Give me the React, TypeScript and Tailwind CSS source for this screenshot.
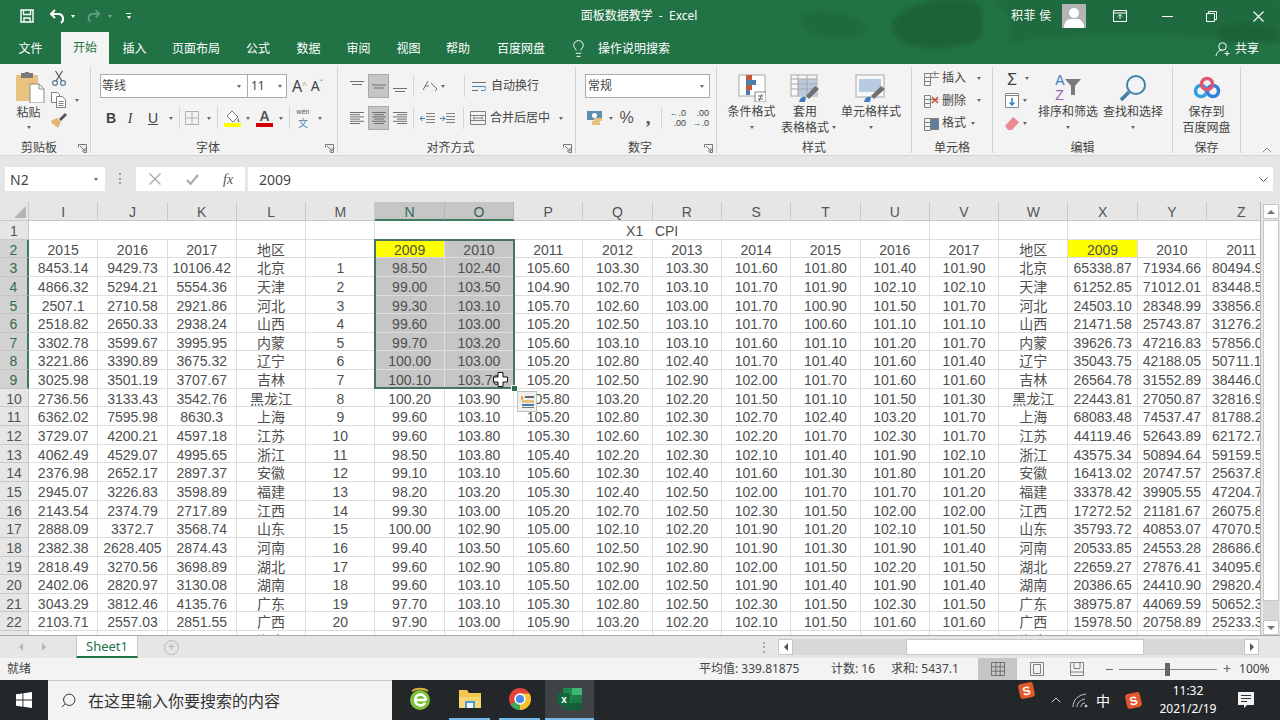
import { ChevronUp, Lightbulb, Search } from "lucide-react";
import type { ReactNode } from "react";

const provinces = "北京 天津 河北 山西 内蒙 辽宁 吉林 黑龙江 上海 江苏 浙江 安徽 福建 江西 山东 河南 湖北 湖南 广东 广西";

const columns = [
  "8453.14 4866.32 2507.1 2518.82 3302.78 3221.86 3025.98 2736.56 6362.02 3729.07 4062.49 2376.98 2945.07 2143.54 2888.09 2382.38 2818.49 2402.06 3043.29 2103.71",
  "9429.73 5294.21 2710.58 2650.33 3599.67 3390.89 3501.19 3133.43 7595.98 4200.21 4529.07 2652.17 3226.83 2374.79 3372.7 2628.405 3270.56 2820.97 3812.46 2557.03",
  "10106.42 5554.36 2921.86 2938.24 3995.95 3675.32 3707.67 3542.76 8630.3 4597.18 4995.65 2897.37 3598.89 2717.89 3568.74 2874.43 3698.89 3130.08 4135.76 2851.55",
  provinces,
  "1 2 3 4 5 6 7 8 9 10 11 12 13 14 15 16 17 18 19 20",
  "98.50 99.00 99.30 99.60 99.70 100.00 100.10 100.20 99.60 99.60 98.50 99.10 98.20 99.30 100.00 99.40 99.60 99.60 97.70 97.90",
  "102.40 103.50 103.10 103.00 103.20 103.00 103.70 103.90 103.10 103.80 103.80 103.10 103.20 103.00 102.90 103.50 102.90 103.10 103.10 103.00",
  "105.60 104.90 105.70 105.20 105.60 105.20 105.20 105.80 105.20 105.30 105.40 105.60 105.30 105.20 105.00 105.60 105.80 105.50 105.30 105.90",
  "103.30 102.70 102.60 102.50 103.10 102.80 102.50 103.20 102.80 102.60 102.20 102.30 102.40 102.70 102.10 102.50 102.90 102.00 102.80 103.20",
  "103.30 103.10 103.00 103.10 103.10 102.40 102.90 102.20 102.30 102.30 102.30 102.40 102.50 102.50 102.20 102.90 102.80 102.50 102.50 102.20",
  "101.60 101.70 101.70 101.70 101.60 101.70 102.00 101.50 102.70 102.20 102.10 101.60 102.00 102.30 101.90 101.90 102.00 101.90 102.30 102.10",
  "101.80 101.90 100.90 100.60 101.10 101.40 101.70 101.10 102.40 101.70 101.40 101.30 101.70 101.50 101.20 101.30 101.50 101.40 101.50 101.50",
  "101.40 102.10 101.50 101.10 101.20 101.60 101.60 101.50 103.20 102.30 101.90 101.80 101.70 102.00 102.10 101.90 102.20 101.90 102.30 101.60",
  "101.90 102.10 101.70 101.10 101.70 101.40 101.60 101.30 101.70 101.70 102.10 101.20 101.20 102.00 101.50 101.40 101.50 101.40 101.50 101.60",
  provinces,
  "65338.87 61252.85 24503.10 21471.58 39626.73 35043.75 26564.78 22443.81 68083.48 44119.46 43575.34 16413.02 33378.42 17272.52 35793.72 20533.85 22659.27 20386.65 38975.87 15978.50",
  "71934.66 71012.01 28348.99 25743.87 47216.83 42188.05 31552.89 27050.87 74537.47 52643.89 50894.64 20747.57 39905.55 21181.67 40853.07 24553.28 27876.41 24410.90 44069.59 20758.89",
  "80494.9 83448.5 33856.8 31276.2 57856.0 50711.1 38446.0 32816.9 81788.2 62172.7 59159.5 25637.8 47204.7 26075.8 47070.5 28686.6 34095.6 29820.4 50652.3 25233.3",
].map((c) => c.split(" "));

const letters = "I J K L M N O P Q R S T U V W X Y Z".split(" ");
const row2 = "2015 2016 2017 地区 - 2009 2010 2011 2012 2013 2014 2015 2016 2017 地区 2009 2010 2011".split(" ");

const tabs = [
  { label: "文件", cls: "w-[61px] pt-[2px] text-white" },
  { label: "开始", cls: "w-[48px] h-[30px] self-end bg-[#f3f3f3] text-[#217346]" },
  { label: "插入", cls: "w-[51px] pt-[2px] text-white" },
  { label: "页面布局", cls: "w-[72px] pt-[2px] text-white" },
  { label: "公式", cls: "w-[52px] pt-[2px] text-white" },
  { label: "数据", cls: "w-[49px] pt-[2px] text-white" },
  { label: "审阅", cls: "w-[51px] pt-[2px] text-white" },
  { label: "视图", cls: "w-[49px] pt-[2px] text-white" },
  { label: "帮助", cls: "w-[50px] pt-[2px] text-white" },
  { label: "百度网盘", cls: "w-[76px] pt-[2px] text-white" },
];

function Caret({ className = "" }: { className?: string }) {
  return (
    <span
      className={`inline-block w-0 h-0 shrink-0 border-x-[2.5px] border-x-transparent border-t-[3px] border-t-[#666] ${className}`}
    />
  );
}

function Sep({ className = "" }: { className?: string }) {
  return <span className={`block w-px h-[22px] shrink-0 bg-[#d4d4d4] ${className}`} />;
}

function Group({
  className,
  label,
  launcher,
  children,
}: {
  className: string;
  label: string;
  launcher?: boolean;
  children: ReactNode;
}) {
  return (
    <div className={`h-[86px] flex flex-col shrink-0 border-r border-[#d2d2d2] ${className}`}>
      <div className="h-[71px]">{children}</div>
      <div className="h-[15px] flex items-start">
        <span className="flex-1 text-center leading-[20px] text-[12px] text-[#444]">{label}</span>
        {launcher && (
          <svg width="9" height="9" viewBox="0 0 9 9" className="mt-[6px] mr-[3px]" fill="none" stroke="#777">
            <path d="M.5 3.5V.5h8v8h-3M2 2l5 5M7 4v3H4" />
          </svg>
        )}
      </div>
    </div>
  );
}

function BigButton({ className, icon, lines }: { className: string; icon: ReactNode; lines: string[] }) {
  return (
    <div className={`flex flex-col items-center shrink-0 pt-[5px] ${className}`}>
      <div className="h-[32px] flex items-center justify-center">{icon}</div>
      <span className="leading-[16px] text-[12px] text-[#444] whitespace-nowrap">{lines[0]}</span>
      {lines[1] ? (
        <span className="leading-[16px] text-[12px] text-[#444] whitespace-nowrap">{lines[1]}</span>
      ) : (
        <Caret className="mt-[6px]" />
      )}
    </div>
  );
}

function AlignIcon({ kind }: { kind: "left" | "center" | "right" }) {
  const rows = [0, 1, 2, 3, 4, 5];
  return (
    <svg width="14" height="14" viewBox="0 0 14 14" stroke="#707070">
      {rows.map((r) => {
        const short = r % 2 === 1 ? 4 : 0;
        const x1 = kind === "left" ? 0 : kind === "center" ? short / 2 : short;
        const x2 = kind === "left" ? 14 - short : kind === "center" ? 14 - short / 2 : 14;
        return <line key={r} x1={x1} x2={x2} y1={1.5 + r * 2.2} y2={1.5 + r * 2.2} />;
      })}
    </svg>
  );
}

function VAlignIcon({ pos }: { pos: "top" | "mid" | "bot" }) {
  const y = pos === "top" ? 2 : pos === "mid" ? 5.5 : 9;
  return (
    <svg width="14" height="14" viewBox="0 0 14 14" stroke="#707070">
      <line x1="0" x2="14" y1={y + 0.5} y2={y + 0.5} />
      <line x1="2" x2="12" y1={y + 3.5} y2={y + 3.5} />
    </svg>
  );
}

function MiniGridIcon({ children }: { children?: ReactNode }) {
  return (
    <svg width="17" height="17" viewBox="0 0 17 17" fill="none" stroke="#808080">
      <path d="M1.5 3.5h6v4h-6zM1.5 7.5h6v4h-6zM1.5 11.5h6v4h-6zM7.5 7.5h8" />
      {children}
    </svg>
  );
}

function TitleBar() {
  return (
    <div className="h-[64px] bg-[#217346] relative shrink-0 overflow-hidden">
      <svg width="1280" height="64" viewBox="0 0 1280 64" className="absolute left-0 top-0 blur-[2px]">
        <path d="M800 18c10-10 40-8 60 2 10 8 6 16-10 17-20 1-48 1-50-19z" fill="#1f6b40" />
        <path d="M892 24c6-18 50-30 80-24 16 6 8 24 10 34-6 12-30 14-52 14-22-2-40-8-38-24z" fill="#1d6339" />
        <path d="M990 0h290v34c-40-4-60 10-94 2-40-6-90-4-180 6 8-12 6-30-16-42z" fill="#1f6a3f" />
        <path d="M1220 28c16-8 40-4 60 4v10h-56c-8-2-10-10-4-14z" fill="#1d6339" />
      </svg>
      <div className="relative h-[32px] flex items-center text-white">
        <svg width="14" height="14" viewBox="0 0 14 14" className="ml-[20px]" fill="none" stroke="#fff" strokeWidth="1.4">
          <path d="M1 1h12v12H1z" />
          <path d="M3.5 1v4.5h7V1M4 13V9h6v4" />
        </svg>
        <svg width="17" height="15" viewBox="0 0 17 15" className="ml-[15px]" fill="none" stroke="#fff" strokeWidth="2">
          <path d="M6 1L2 5l4 4M2 5h8a5 5 0 0 1 2 9" />
        </svg>
        <Caret className="ml-[5px] border-t-white" />
        <svg width="15" height="14" viewBox="0 0 17 15" className="ml-[11px] opacity-30" fill="none" stroke="#fff" strokeWidth="2">
          <path d="M11 1l4 4-4 4M15 5H7a5 5 0 0 0-2 9" />
        </svg>
        <Caret className="ml-[7px] opacity-40 border-t-white" />
        <span className="ml-[14px] flex flex-col items-center gap-[2px]">
          <span className="block w-[5px] h-px bg-white" />
          <Caret className="border-t-white" />
        </span>
        <span className="ml-[448px] w-[120px] text-center text-[12px] whitespace-nowrap">面板数据教学 &nbsp;-&nbsp; Excel</span>
        <span className="ml-[312px] text-[12px] whitespace-nowrap tracking-[0.4px]">积菲 侯</span>
        <span className="ml-[10px] w-[24px] h-[24px] bg-[#b4b4b4] flex items-end justify-center overflow-hidden">
          <svg width="20" height="22" viewBox="0 0 20 22" fill="#fff">
            <circle cx="10" cy="7" r="5" />
            <path d="M0 22c0-7 4-9 7-9h6c3 0 7 2 7 9z" />
          </svg>
        </span>
        <svg width="14" height="12" viewBox="0 0 14 12" className="ml-[27px]" fill="none" stroke="#fff">
          <path d="M.5.5h13v11H.5zM.5 3h13M7 9V4.5M5 6.5l2-2 2 2" />
        </svg>
        <span className="ml-[35px] w-[11px] h-px bg-white" />
        <svg width="11" height="11" viewBox="0 0 11 11" className="ml-[33px]" fill="none" stroke="#fff">
          <path d="M.5 2.5h8v8h-8zM2.5 2.5v-2h8v8h-2" />
        </svg>
        <svg width="11" height="11" viewBox="0 0 11 11" className="ml-[36px]" fill="none" stroke="#fff" strokeWidth="1.1">
          <path d="M.5.5l10 10M10.500.5l-10 10" />
        </svg>
      </div>
      <div className="relative h-[32px] flex items-center text-[12px]">
        {tabs.map((t) => (
          <span key={t.label} className={`h-full flex items-center justify-center whitespace-nowrap ${t.cls}`}>
            {t.label}
          </span>
        ))}
        <Lightbulb size={19} strokeWidth={1.2} className="ml-[10px] text-white" />
        <span className="ml-[10px] pt-[2px] text-white">操作说明搜索</span>
        <span className="ml-auto mr-[21px] pt-[2px] flex items-center gap-[4px] text-white">
          <svg width="16" height="16" viewBox="0 0 16 16" fill="none" stroke="#fff">
            <circle cx="7.500" cy="5.500" r="3.800" />
            <path d="M1 15c1-4 3-6 6.500-6M12 10v5M9.500 12.500h5" />
          </svg>
          共享
        </span>
      </div>
    </div>
  );
}

function Ribbon() {
  return (
    <div className="h-[92px] bg-[#f3f3f3] border-b border-[#d6d6d6] shrink-0 flex pt-[3px] text-[#444]">
      <Group className="w-[91px]" label="剪贴板" launcher>
        <div className="flex">
          <div className="ml-[9px] w-[39px] flex flex-col items-center pt-[5px]">
            <svg width="29" height="31" viewBox="0 0 29 31" className="ml-[4px]">
              <rect x="0" y="3" width="22" height="26" rx="1" fill="#e8c27e" />
              <rect x="5" y="1" width="12" height="5" fill="#7a7a7a" />
              <rect x="9" y="0" width="4" height="3" fill="#7a7a7a" />
              <path d="M14 12h9l5 5v14H14z" fill="#fff" stroke="#8a8a8a" />
              <path d="M23 12v5h5" fill="none" stroke="#8a8a8a" />
            </svg>
            <span className="leading-[16px] mt-[2px] text-[12px]">粘贴</span>
            <Caret className="mt-[5px]" />
          </div>
          <div className="flex flex-col items-start ml-[3px]">
            <svg width="14" height="16" viewBox="0 0 14 16" className="mt-[3px] ml-[1px]" fill="none" stroke="#5f7f9f" strokeWidth="1.2">
              <circle cx="3" cy="13" r="2.400" />
              <circle cx="11" cy="13" r="2.400" />
              <path d="M4 11L10.500 1M10 11L3.500 1" stroke="#555" />
            </svg>
            <span className="flex items-center mt-[6px]">
              <svg width="15" height="16" viewBox="0 0 15 16" fill="#fff" stroke="#808080">
                <path d="M.5.5h6l2 2v8h-8z" />
                <path d="M5.500 4.500h6l3 3v8h-9z" />
                <path d="M7.500 9.500h5M7.500 11.500h5M7.500 13.500h5" />
              </svg>
              <Caret className="ml-[9px]" />
            </span>
            <svg width="16" height="15" viewBox="0 0 16 15" className="mt-[5px]">
              <path d="M0 8l6-3 4 4-3 6-2-2-1 0-1-2-2 0z" fill="#e2b56f" />
              <path d="M8 6l6-6 2 2-6 6z" fill="#555" />
            </svg>
          </div>
        </div>
      </Group>

      <Group className="w-[247px]" label="字体" launcher>
        <div className="flex items-center mt-[7px] ml-[9px] h-[24px]">
          <span className="w-[148px] h-full bg-white border border-[#ababab] flex items-center justify-between px-[1px] pr-[6px] text-[12px]">
            等线
            <Caret />
          </span>
          <span className="w-[39px] h-full bg-white border border-l-0 border-[#ababab] flex items-center justify-between pl-[3px] pr-[4px] text-[12px]">
            11
            <Caret />
          </span>
          <span className="ml-[5px] text-[16px] leading-none text-[#444]">
            A<sup className="text-[8px] text-[#c69c2e]">^</sup>
          </span>
          <span className="ml-[4px] text-[14px] leading-none text-[#444]">
            A<sup className="text-[8px] text-[#3f7fbf]">ˇ</sup>
          </span>
        </div>
        <div className="flex items-center mt-[8px] h-[24px]">
          <span className="ml-[13px] w-[14px] text-center text-[14px] font-bold [font-family:'Liberation_Sans',sans-serif]">B</span>
          <span className="ml-[6px] w-[12px] text-center text-[14px] italic [font-family:'Liberation_Serif',serif]">I</span>
          <span className="ml-[11px] w-[12px] text-center text-[14px] underline [font-family:'Liberation_Sans',sans-serif]">U</span>
          <Caret className="ml-[9.5px]" />
          <Sep className="ml-[6.5px]" />
          <svg width="14" height="14" viewBox="0 0 14 14" className="ml-[5px]" fill="none" stroke="#b0b0b0">
            <path d="M.5.5h13v13H.5zM7 .5v13M.5 7h13" />
          </svg>
          <Caret className="ml-[7.5px]" />
          <Sep className="ml-[6.5px]" />
          <svg width="17" height="17" viewBox="0 0 17 17" className="ml-[6px]">
            <path d="M8 1l6 6-5 5-6-6z" fill="#fff" stroke="#777" />
            <path d="M14 8c1 2 2 3 1 4s-2-2-1-4z" fill="#5f7f9f" />
            <rect y="13" width="17" height="4" fill="#ffff00" />
          </svg>
          <Caret className="ml-[4.5px]" />
          <span className="ml-[6.5px] w-[17px] flex flex-col items-center">
            <span className="text-[14px] leading-[14px] font-bold text-[#555] [font-family:'Liberation_Sans',sans-serif]">A</span>
            <span className="block w-[17px] h-[4px] bg-[#d40000]" />
          </span>
          <Caret className="ml-[5.5px]" />
          <Sep className="ml-[6.5px]" />
          <span className="ml-[6px] w-[14px] flex flex-col items-center gap-[3px] leading-none">
            <span className="text-[7px] leading-[7px] text-[#555] [font-family:'Liberation_Sans',sans-serif]">wén</span>
            <span className="text-[10px] leading-[10px] text-[#4a86b8]">文</span>
          </span>
          <Caret className="ml-[7.5px]" />
        </div>
      </Group>

      <Group className="w-[238px]" label="对齐方式" launcher>
        <div className="flex items-center mt-[7px] ml-[8px] h-[24px]">
          <span className="w-[22px] h-full flex items-center justify-center"><VAlignIcon pos="top" /></span>
          <span className="w-[21px] h-full flex items-center justify-center bg-[#c6c6c6] border border-[#a8a8a8]"><VAlignIcon pos="mid" /></span>
          <span className="w-[22px] h-full flex items-center justify-center"><VAlignIcon pos="bot" /></span>
          <Sep className="ml-[2px]" />
          <svg width="16" height="14" viewBox="0 0 16 14" className="ml-[8px]" fill="none" stroke="#707070">
            <path d="M1 11l5-9M3 7h4M9 4l6 6M13 12l2-2" />
          </svg>
          <Caret className="ml-[3px]" />
          <Sep className="ml-[19px]" />
          <svg width="14" height="15" viewBox="0 0 14 15" className="ml-[7px]" fill="none" stroke="#707070">
            <path d="M0 3.500h14M0 11.500h6" />
            <path d="M0 7.500h12a2 2 0 0 1 0 4H9" stroke="#4a86b8" />
          </svg>
          <span className="ml-[5px] text-[12px] whitespace-nowrap">自动换行</span>
        </div>
        <div className="flex items-center mt-[8px] ml-[8px] h-[24px]">
          <span className="w-[22px] h-full flex items-center justify-center"><AlignIcon kind="left" /></span>
          <span className="w-[21px] h-full flex items-center justify-center bg-[#c6c6c6] border border-[#a8a8a8]"><AlignIcon kind="center" /></span>
          <span className="w-[22px] h-full flex items-center justify-center"><AlignIcon kind="right" /></span>
          <Sep className="ml-[2px]" />
          <svg width="15" height="13" viewBox="0 0 15 13" className="ml-[6px]" fill="none" stroke="#808080">
            <path d="M6 1.500h9M6 4.500h9M6 7.500h9M6 10.500h9" />
            <path d="M5 6.500H0M2.500 4L0 6.500 2.500 9" stroke="#2f7fbf" />
          </svg>
          <svg width="15" height="13" viewBox="0 0 15 13" className="ml-[5px]" fill="none" stroke="#808080">
            <path d="M6 1.500h9M6 4.500h9M6 7.500h9M6 10.500h9" />
            <path d="M0 6.500h5M2.500 4L5 6.500 2.500 9" stroke="#2f7fbf" />
          </svg>
          <Sep className="ml-[8px]" />
          <svg width="16" height="14" viewBox="0 0 16 14" className="ml-[6px]" fill="none" stroke="#808080">
            <path d="M.5.5h15v13H.5zM.5 4.500h15M.5 9.500h15M3 7h10M3 7l1.500-1.500M3 7l1.500 1.500M13 7l-1.500-1.500M13 7l-1.500 1.500" />
          </svg>
          <span className="ml-[4px] text-[12px] whitespace-nowrap">合并后居中</span>
          <Caret className="ml-[9px]" />
        </div>
      </Group>

      <Group className="w-[141px]" label="数字" launcher>
        <div className="mt-[7px] ml-[9px] w-[125px] h-[24px] bg-white border border-[#ababab] flex items-center justify-between pl-[2px] pr-[5px] text-[12px]">
          常规
          <Caret />
        </div>
        <div className="flex items-center mt-[8px] h-[24px]">
          <svg width="16" height="16" viewBox="0 0 16 16" className="ml-[11px]">
            <rect x="0" y="1" width="15" height="9" fill="#5f8fb0" />
            <circle cx="7.500" cy="5.500" r="2.500" fill="#fff" />
            <rect x="7" y="8" width="8" height="3" fill="#e8c27e" />
            <rect x="5" y="11" width="8" height="4" fill="#e8c27e" />
          </svg>
          <Caret className="ml-[6px]" />
          <span className="ml-[5px] w-[17px] text-center text-[16px] text-[#555] [font-family:'Liberation_Sans',sans-serif]">%</span>
          <span className="ml-[5px] w-[16px] text-center text-[19px] leading-[14px] font-bold text-[#555] [font-family:'Liberation_Serif',serif]">,</span>
          <Sep className="ml-[5px]" />
          <span className="ml-[3px] w-[21px] flex flex-col text-[9px] text-right [font-family:'Liberation_Sans',sans-serif]">
            <span className="block leading-[10px]"><b className="text-[#2f7fbf]">←</b>.0</span>
            <span className="block leading-[10px]">.00</span>
          </span>
          <span className="ml-[2px] w-[21px] flex flex-col text-[9px] text-right [font-family:'Liberation_Sans',sans-serif]">
            <span className="block leading-[10px]">.00</span>
            <span className="block leading-[10px]"><b className="text-[#2f7fbf]">→</b>.0</span>
          </span>
        </div>
      </Group>

      <Group className="w-[195px] " label="样式">
        <div className="flex">
          <BigButton
            className="ml-[7px] w-[55px]"
            lines={["条件格式"]}
            icon={
              <svg width="28" height="28" viewBox="0 0 28 28">
                <rect x="1" y="1" width="26" height="21" fill="#fff" stroke="#a8a8a8" />
                <rect x="8" y="1" width="6" height="5" fill="#c85a3c" />
                <rect x="8" y="6" width="10" height="5" fill="#4a7fb0" />
                <rect x="8" y="11" width="6" height="5" fill="#c85a3c" />
                <rect x="8" y="16" width="4" height="5" fill="#4a7fb0" />
                <rect x="17" y="18" width="11" height="10" fill="#fff" stroke="#888" />
                <path d="M20 22h5M20 25h5M24 20l-3 7" stroke="#666" fill="none" />
              </svg>
            }
          />
          <div className="flex flex-col items-center">
            <BigButton
              className="w-[52px]"
              lines={["套用", "表格格式"]}
              icon={
                <svg width="30" height="29" viewBox="0 0 30 29">
                  <rect x="1" y="1" width="26" height="21" fill="#f8f8f8" stroke="#a8a8a8" />
                  <rect x="8" y="5" width="19" height="17" fill="#b8cbe0" />
                  <path d="M1 5h26M1 10h26M1 15h26M8 1v21M17 1v21" stroke="#a8a8a8" fill="none" />
                  <path d="M9 28c1-5 4-6 7-5l-1 5z" fill="#3f7fbf" />
                  <path d="M16 22l9-10 4 3-10 10z" fill="#707070" />
                </svg>
              }
            />
          </div>
          <Caret className="mt-[59px] ml-[1px] -mr-[6px]" />
          <BigButton
            className="ml-[6px] w-[70px]"
            lines={["单元格样式"]}
            icon={
              <svg width="32" height="29" viewBox="0 0 32 29">
                <rect x="1" y="1" width="28" height="22" fill="#f8f8f8" stroke="#a8a8a8" />
                <rect x="4" y="5" width="22" height="13" fill="#b8cbe0" />
                <path d="M9 28c1-5 4-6 7-5l-1 5z" fill="#3f7fbf" />
                <path d="M16 22l10-10 4 3-11 10z" fill="#707070" />
              </svg>
            }
          />
        </div>
      </Group>

      <Group className="w-[81px]" label="单元格">
        {[
          { t: "插入", gap: "ml-[11px]", icon: <path d="M7.500 3.500h9M12 1v5" stroke="#808080" /> },
          { t: "删除", gap: "ml-[11px]", icon: <path d="M9 5l6 6M15 5l-6 6" stroke="#d0502f" strokeWidth="1.5" /> },
          { t: "格式", gap: "ml-[5px]", icon: <path d="M7.500 3.500h8v11h-8z" fill="#5a7f9f" stroke="#808080" /> },
        ].map((r) => (
          <div key={r.t} className="h-[22.5px] flex items-center pl-[11px] text-[12px]">
            <MiniGridIcon>{r.icon}</MiniGridIcon>
            <span className="ml-[2px]">{r.t}</span>
            <Caret className={r.gap} />
          </div>
        ))}
      </Group>

      <Group className="w-[180px]" label="编辑">
        <div className="flex">
          <div className="w-[40px] flex flex-col pl-[12px]">
            <div className="h-[22.5px] flex items-center">
              <span className="w-[14px] text-center text-[17px] leading-none text-[#444]">Σ</span>
              <Caret className="ml-[6px]" />
            </div>
            <div className="h-[22.5px] flex items-center">
              <svg width="14" height="15" viewBox="0 0 14 15" fill="#fff" stroke="#888">
                <path d="M.5.5h13v14H.5z" />
                <path d="M.5 2.500h13" />
                <path d="M7 5v7M4.500 9.500L7 12l2.500-2.500" stroke="#2f7fbf" strokeWidth="1.5" fill="none" />
              </svg>
              <Caret className="ml-[4px]" />
            </div>
            <div className="h-[22.5px] flex items-center">
              <svg width="14" height="13" viewBox="0 0 14 13">
                <path d="M0 9l8-9 6 5-7 8H3z" fill="#ea8a92" />
              </svg>
              <Caret className="ml-[4px]" />
            </div>
          </div>
          <BigButton
            className="w-[70px]"
            lines={["排序和筛选"]}
            icon={
              <span className="flex items-center">
                <span className="flex flex-col text-[14px] [font-family:'Liberation_Sans',sans-serif]">
                  <span className="block leading-[15px] text-[#3f7fbf]">A</span>
                  <span className="block leading-[15px] text-[#9a5fb0]">Z</span>
                </span>
                <svg width="16" height="18" viewBox="0 0 16 18" className="mb-[2px]">
                  <path d="M0 1h16l-6 7v9H6V8z" fill="#7a7a7a" />
                </svg>
              </span>
            }
          />
          <BigButton
            className="w-[60px]"
            lines={["查找和选择"]}
            icon={
              <svg width="28" height="28" viewBox="0 0 28 28" fill="none" stroke="#3f7fa8">
                <circle cx="17" cy="11" r="9" strokeWidth="2" />
                <path d="M10 18L2 26" strokeWidth="3.500" />
              </svg>
            }
          />
        </div>
      </Group>

      <Group className="w-[68px]" label="保存">
        <BigButton
          className="w-full"
          lines={["保存到", "百度网盘"]}
          icon={
            <svg width="28" height="24" viewBox="0 0 28 24" fill="none" strokeWidth="3.500">
              <circle cx="8" cy="15" r="5.500" stroke="#2f9fdf" />
              <circle cx="20" cy="15" r="5.500" stroke="#2f7fdf" />
              <circle cx="14" cy="8" r="5.500" stroke="#e0566f" />
            </svg>
          }
        />
      </Group>

      <div className="flex-1 flex items-end justify-end pr-[5px]">
        <ChevronUp size={16} strokeWidth={1} className="-mb-[3px] text-[#555]" />
      </div>
    </div>
  );
}

function FormulaBar() {
  return (
    <div className="h-[46px] bg-[#e6e6e6] shrink-0 flex items-start pt-[11px] text-[14px] text-[#444]">
      <div className="ml-[5px] w-[100px] h-[24px] bg-white flex items-center justify-between pl-[5px] pr-[7px]">
        N2
        <Caret />
      </div>
      <div className="ml-[14px] w-[3px] h-[11px] mt-[6px] flex flex-col justify-between">
        <span className="block w-[2px] h-[2px] bg-[#a0a0a0]" />
        <span className="block w-[2px] h-[2px] bg-[#a0a0a0]" />
        <span className="block w-[2px] h-[2px] bg-[#a0a0a0]" />
      </div>
      <div className="ml-[14px] w-[109px] h-[24px] bg-white flex items-center pl-[13px]">
        <svg width="12" height="12" viewBox="0 0 12 12" fill="none" stroke="#a8a8a8" strokeWidth="1.3">
          <path d="M.5.5l11 11M11.500.5l-11 11" />
        </svg>
        <svg width="13" height="11" viewBox="0 0 13 11" className="ml-[25px]" fill="none" stroke="#a8a8a8" strokeWidth="2">
          <path d="M1 6l3.500 4L12 1" />
        </svg>
        <span className="ml-[24px] italic text-[14px] [font-family:'Liberation_Serif',serif] text-[#555]">fx</span>
      </div>
      <div className="ml-[3px] w-[1025px] h-[24px] bg-white flex items-center justify-between pl-[11px] pr-[5px]">
        2009
        <svg width="9" height="5" viewBox="0 0 9 5" fill="none" stroke="#555">
          <path d="M.5.5l4 4 4-4" />
        </svg>
      </div>
    </div>
  );
}

function Cell({ children, cls = "" }: { children?: ReactNode; cls?: string }) {
  return (
    <div className={`whitespace-nowrap text-center leading-[20px] border-r border-b border-[#dddddd] ${cls}`}>
      {children}
    </div>
  );
}

function RowHead({ n, on }: { n?: number; on?: boolean }) {
  return (
    <div
      className={`text-center leading-[20px] border-b ${
        on
          ? "bg-[#d2d2d2] text-[#2f6b4f] border-[#c4c4c4] border-r-2 border-r-[#3f7a5c]"
          : "bg-[#e6e6e6] text-[#555] border-[#c8c8c8] border-r"
      }`}
    >
      {n}
    </div>
  );
}

function Sheet() {
  const isSel = (c: number, r: number) => (c === 5 || c === 6) && r <= 6;
  return (
    <div className="h-[434px] flex shrink-0 bg-white border-b border-[#a8a8a8]">
      <div className="w-[1260px] relative overflow-hidden text-[14px] text-[#4f4f4f] [font-family:'Liberation_Sans','Noto_Sans_CJK_SC',sans-serif]">
        <div className="grid grid-cols-[29px_repeat(18,69.3px)] grid-rows-[19px_repeat(23,18.65px)] w-[1280px]">
          <div className="bg-[#e6e6e6] border-r border-b border-[#c8c8c8] flex items-end justify-end pr-[2px] pb-[2px]">
            <span className="block w-0 h-0 border-l-[12px] border-l-transparent border-b-[12px] border-b-[#b4b4b4]" />
          </div>
          {letters.map((l, i) => (
            <div
              key={l}
              className={`text-center leading-[20px] border-r border-b ${
                i === 5 || i === 6
                  ? "bg-[#c6c6c6] text-[#2f6b4f] border-r-[#b4b4b4] border-b-2 border-b-[#3f7a5c]"
                  : "bg-[#e6e6e6] text-[#555] border-[#c8c8c8]"
              }`}
            >
              {l}
            </div>
          ))}

          <RowHead n={1} />
          <Cell cls="col-span-3" />
          <Cell />
          <Cell />
          <Cell cls="col-span-8">X1 &nbsp; CPI</Cell>
          <Cell />
          <Cell />
          <Cell cls="col-span-3" />

          <RowHead n={2} on />
          {row2.map((v, c) => (
            <Cell
              key={c}
              cls={c === 5 || c === 15 ? "bg-[#ffff00]" : c === 6 ? "bg-[#c6c6c6] border-[#bcbcbc]" : ""}
            >
              {v === "-" ? "" : v}
            </Cell>
          ))}

          {columns[0].map((_, r) => (
            <>
              <RowHead key={`h${r}`} n={r + 3} on={r <= 6} />
              {columns.map((col, c) => (
                <Cell
                  key={`${c}-${r}`}
                  cls={isSel(c, r) ? "bg-[#c6c6c6] border-[#bcbcbc]" : c === 17 ? "text-left pl-[5px]" : ""}
                >
                  {col[r]}
                </Cell>
              ))}
            </>
          ))}

          <RowHead n={23} />
          {letters.map((l, c) => (
            <Cell key={`z${l}`}>{c === 3 || c === 14 ? "海南" : ""}</Cell>
          ))}
        </div>

        {/* selection frame, fill handle, cursor and quick analysis sit over the cells */}
        <div className="absolute left-[374px] top-[37px] w-[141px] h-[150px] border-2 border-[#47755f] pointer-events-none" />
        <div className="absolute left-[511px] top-[183px] w-[7px] h-[7px] bg-[#2f6b4f] border border-white" />
        <svg width="15" height="15" viewBox="0 0 15 15" className="absolute left-[493px] top-[170px]">
          <path d="M5 .5h5v4.500h4.500v5H10v4.500H5V10H.5V5H5z" fill="#fff" stroke="#111" />
        </svg>
        <div className="absolute left-[517px] top-[189px] w-[20px] h-[21px] bg-[#f0f0f0] border border-[#b8c4b8] flex items-center justify-center">
          <svg width="15" height="15" viewBox="0 0 15 15">
            <path d="M1 1l3 3-3 3z" fill="#e8a33a" />
            <rect x="5" y="2" width="9" height="2" fill="#666" />
            <rect x="2" y="6" width="12" height="3" fill="#e8c27e" />
            <rect x="2" y="10" width="12" height="2" fill="#3f7fa8" />
            <rect x="2" y="13" width="12" height="1" fill="#777" />
          </svg>
        </div>
      </div>

      <div className="w-[20px] bg-[#e6e6e6] flex flex-col items-center pt-[2px] border-l border-[#b8b8b8]">
        <span className="w-[16px] h-[15px] bg-white border border-[#c8c8c8] flex items-center justify-center">
          <span className="block w-0 h-0 border-x-[4px] border-x-transparent border-b-[4px] border-b-[#777]" />
        </span>
        <span className="w-[16px] h-[381px] mt-[1px] bg-white border border-[#c8c8c8]" />
        <span className="w-[16px] flex-1 bg-[#d8d8d8]" />
        <span className="w-[16px] h-[15px] bg-white border border-[#c8c8c8] flex items-center justify-center">
          <Caret className="border-x-[4px] border-t-[4px] border-t-[#777]" />
        </span>
      </div>
    </div>
  );
}

function TabBar() {
  return (
    <div className="h-[22px] bg-[#e6e6e6] shrink-0 flex items-center">
      <span className="ml-[19px] w-0 h-0 border-y-[4px] border-y-transparent border-r-[4px] border-r-[#b4b4b4]" />
      <span className="ml-[19px] w-0 h-0 border-y-[4px] border-y-transparent border-l-[4px] border-l-[#b4b4b4]" />
      <span className="ml-[30px] w-[62px] h-[22px] -mt-[1px] bg-white border-x border-b-2 border-x-[#c4c4c4] border-b-[#217346] text-center text-[13px] leading-[20px] text-[#217346]">
        Sheet1
      </span>
      <span className="ml-[26px] w-[15px] h-[15px] rounded-full border border-[#b8b8b8] flex items-center justify-center text-[12px] leading-none text-[#b0b0b0]">
        +
      </span>
      <span className="ml-[584px] w-[2px] h-[11px] flex flex-col justify-between">
        <span className="block w-[2px] h-[2px] bg-[#a8a8a8]" />
        <span className="block w-[2px] h-[2px] bg-[#a8a8a8]" />
        <span className="block w-[2px] h-[2px] bg-[#a8a8a8]" />
      </span>
      <div className="ml-[13px] w-[481px] h-[16px] bg-[#d8d8d8] flex items-stretch">
        <span className="w-[15px] bg-white border border-[#c8c8c8] flex items-center justify-center">
          <span className="block w-0 h-0 border-y-[4px] border-y-transparent border-r-[4px] border-r-[#555]" />
        </span>
        <span className="ml-[113px] w-[238px] bg-white border border-[#c8c8c8]" />
        <span className="ml-auto w-[15px] bg-white border border-[#c8c8c8] flex items-center justify-center">
          <span className="block w-0 h-0 border-y-[4px] border-y-transparent border-l-[4px] border-l-[#555]" />
        </span>
      </div>
    </div>
  );
}

function StatusBar() {
  return (
    <div className="h-[22px] bg-[#f3f3f3] shrink-0 flex items-center text-[12px] text-[#444]">
      <span className="ml-[7px] w-[24px]">就绪</span>
      <span className="ml-[668px] w-[102px] whitespace-nowrap">平均值: 339.81875</span>
      <span className="ml-[30px] w-[45px] whitespace-nowrap">计数: 16</span>
      <span className="ml-[15px] w-[70px] whitespace-nowrap">求和: 5437.1</span>
      <span className="ml-[17px] w-[39px] h-full bg-[#c6c6c6] flex items-center justify-center">
        <svg width="14" height="14" viewBox="0 0 14 14" fill="none" stroke="#707070">
          <path d="M.5.5h13v13H.5zM4.800.5v13M9.200.5v13M.5 4.800h13M.5 9.200h13" />
        </svg>
      </span>
      <svg width="14" height="14" viewBox="0 0 14 14" className="ml-[13px]" fill="none" stroke="#808080">
        <path d="M.5.5h13v13H.5zM3.500 2.500h7v9h-7z" />
      </svg>
      <svg width="14" height="14" viewBox="0 0 14 14" className="ml-[26px]" fill="none" stroke="#808080">
        <path d="M.5.5h13v13H.5zM4 .5v6h6v-6M.5 10h13" />
      </svg>
      <span className="ml-[22px] block w-[7px] h-px bg-[#666]" />
      <div className="ml-[6px] w-[98px] h-[16px] flex items-center">
        <span className="w-[46px] h-px bg-[#888]" />
        <span className="w-[5px] h-[13px] bg-[#666]" />
        <span className="flex-1 h-px bg-[#888]" />
      </div>
      <span className="ml-[6px] text-[14px] leading-none text-[#666]">+</span>
      <span className="ml-[8px] whitespace-nowrap">100%</span>
    </div>
  );
}

function SogouBadge({ className = "" }: { className?: string }) {
  return (
    <span
      className={`w-[15px] h-[15px] rounded-[3px] bg-[#e2572b] flex items-center justify-center text-[12px] leading-none font-bold text-white [font-family:'Liberation_Sans',sans-serif] ${className}`}
    >
      S
    </span>
  );
}

function TaskIcon({ children, cls = "", underline }: { children: ReactNode; cls?: string; underline?: boolean }) {
  return (
    <div className={`h-full flex flex-col items-center ${cls}`}>
      <div className="flex-1 flex items-center justify-center">{children}</div>
      <span className={`block w-[41px] h-[2px] ${underline ? "bg-[#76b9ed]" : "bg-transparent"}`} />
    </div>
  );
}

function Taskbar() {
  return (
    <div className="h-[40px] bg-[#24272a] shrink-0 flex items-center text-white relative">
      <div className="w-[48px] h-full flex items-center justify-center">
        <svg width="16" height="16" viewBox="0 0 16 16" fill="#fff">
          <path d="M0 2.300l6.500-.9v6.200H0zM7.400 1.300L16 0v7.600H7.400zM0 8.500h6.500v6.200L0 13.800zM7.400 8.500H16V16l-8.600-1.200z" />
        </svg>
      </div>
      <div className="w-[344px] h-full bg-[#f3f3f3] border-t border-[#c8c8c8] flex items-center text-[16px] text-[#333]">
        <Search size={17} strokeWidth={1.4} className="ml-[12px] -scale-x-100" />
        <span className="ml-[11px] whitespace-nowrap">在这里输入你要搜索的内容</span>
      </div>
      <TaskIcon cls="w-[41px] ml-[7px]">
        <svg width="22" height="24" viewBox="0 0 22 24">
          <circle cx="11" cy="13" r="10" fill="#7ec13f" />
          <path d="M3 4c4-3 12-3 16 0" stroke="#d8b13a" strokeWidth="2" fill="none" />
          <path d="M5 13h12M6 13a5.500 5.500 0 0 1 11 0M6 13a5.500 5.500 0 0 0 10 3" stroke="#fff" strokeWidth="2.500" fill="none" />
        </svg>
      </TaskIcon>
      <TaskIcon cls="w-[41px] ml-[9px]" underline>
        <svg width="22" height="20" viewBox="0 0 22 20">
          <path d="M0 1h8l2 3h12v15H0z" fill="#f3c64d" />
          <rect x="0" y="8" width="22" height="11" fill="#f7d774" />
          <rect x="6" y="12" width="10" height="7" fill="#4a9fd8" />
          <rect x="8" y="14" width="6" height="5" fill="#f3f3f3" />
        </svg>
      </TaskIcon>
      <TaskIcon cls="w-[41px] ml-[9px]" underline>
        <svg width="22" height="22" viewBox="0 0 22 22">
          <circle cx="11" cy="11" r="11" fill="#e0443a" />
          <path d="M11 11L1.500 16.500A11 11 0 0 0 11 22a11 11 0 0 0 9.500-5.500z" fill="#3fa757" />
          <path d="M11 5.500h9.500A11 11 0 0 1 11 22z" fill="#fbc02d" />
          <circle cx="11" cy="11" r="5" fill="#4a8ef0" stroke="#fff" strokeWidth="1.500" />
        </svg>
      </TaskIcon>
      <TaskIcon cls="w-[49px] ml-[5px] bg-[#3f4346] [&>span]:w-[49px]" underline>
        <svg width="24" height="22" viewBox="0 0 24 22">
          <rect x="5" y="0" width="19" height="22" rx="1" fill="#1f8a50" />
          <rect x="14" y="0" width="10" height="7" fill="#3fb574" />
          <rect x="14" y="7" width="10" height="8" fill="#1f7a45" />
          <rect x="5" y="15" width="19" height="7" fill="#155f38" />
          <rect x="0" y="5" width="12" height="12" rx="1" fill="#10693a" />
          <text x="6" y="14.500" textAnchor="middle" fontSize="10" fontWeight="700" fill="#fff" fontFamily="Liberation Sans">
            x
          </text>
        </svg>
      </TaskIcon>
      <SogouBadge className="absolute left-[1019px] top-[3px] -rotate-12" />
      <ChevronUp size={16} strokeWidth={1.2} className="ml-[454px]" />
      <svg width="16" height="15" viewBox="0 0 16 15" className="ml-[8px]" fill="none" stroke="#c8c8c8">
        <path d="M1 14C1 7 6 2 14 1M5 14c0-4 3-7 8-8M9 14c0-2 1-4 4-4" />
        <circle cx="14" cy="13" r="1" fill="#fff" />
      </svg>
      <span className="ml-[8px] text-[14px]">中</span>
      <SogouBadge className="ml-[16px] -rotate-12" />
      <div className="ml-[12px] w-[70px] flex flex-col items-center text-[12px] leading-[18px] whitespace-nowrap">
        <span>11:32</span>
        <span>2021/2/19</span>
      </div>
      <svg width="17" height="17" viewBox="0 0 17 17" className="ml-[15px]">
        <path d="M0 0h16v13H9l-3 3v-3H0z" fill="#f3f3f3" />
        <path d="M3 3.500h10M3 6.500h10M3 9.500h6" stroke="#333" />
      </svg>
    </div>
  );
}

export default function App() {
  return (
    <div className="w-[1280px] h-[720px] overflow-hidden flex flex-col bg-white [font-family:'Noto_Sans','Noto_Sans_CJK_SC',sans-serif]">
      <TitleBar />
      <Ribbon />
      <FormulaBar />
      <Sheet />
      <TabBar />
      <StatusBar />
      <Taskbar />
    </div>
  );
}
